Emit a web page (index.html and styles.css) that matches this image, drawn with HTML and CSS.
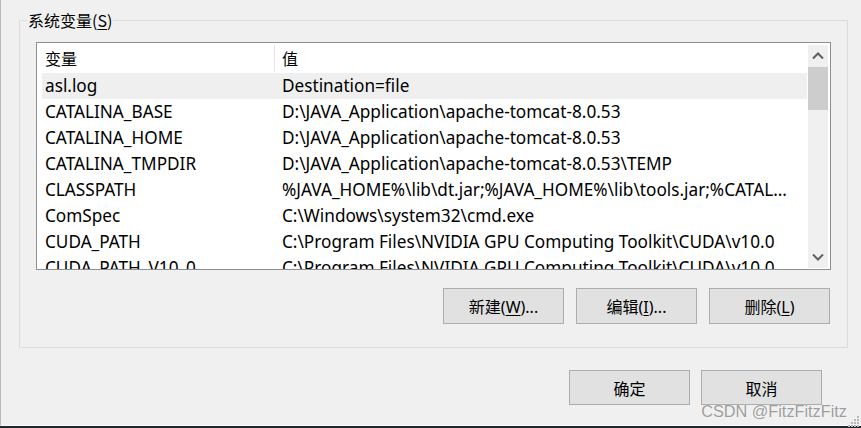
FILE: index.html
```html
<!DOCTYPE html>
<html lang="zh-CN">
<head>
<meta charset="utf-8">
<title>系统变量</title>
<link rel="stylesheet" href="styles.css">
</head>
<body>
<div class="window">
  <fieldset class="group">
    <legend class="group-title">系统变量(<u>S</u>)</legend>
    <div class="listbox">
      <div class="table">
        <div class="thead">
          <div class="hk">变量</div>
          <div class="hv">值</div>
        </div>
        <div class="row selected"><div class="k">asl.log</div><div class="v">Destination=file</div></div>
        <div class="row"><div class="k">CATALINA_BASE</div><div class="v">D:\JAVA_Application\apache-tomcat-8.0.53</div></div>
        <div class="row"><div class="k">CATALINA_HOME</div><div class="v">D:\JAVA_Application\apache-tomcat-8.0.53</div></div>
        <div class="row"><div class="k">CATALINA_TMPDIR</div><div class="v">D:\JAVA_Application\apache-tomcat-8.0.53\TEMP</div></div>
        <div class="row"><div class="k">CLASSPATH</div><div class="v">%JAVA_HOME%\lib\dt.jar;%JAVA_HOME%\lib\tools.jar;%CATAL...</div></div>
        <div class="row"><div class="k">ComSpec</div><div class="v">C:\Windows\system32\cmd.exe</div></div>
        <div class="row"><div class="k">CUDA_PATH</div><div class="v">C:\Program Files\NVIDIA GPU Computing Toolkit\CUDA\v10.0</div></div>
        <div class="row"><div class="k">CUDA_PATH_V10_0</div><div class="v">C:\Program Files\NVIDIA GPU Computing Toolkit\CUDA\v10.0</div></div>
      </div>
      <div class="scrollbar">
        <div class="sb-btn">
          <svg width="12" height="8" viewBox="0 0 12 8"><path d="M1 6.5 L6 1.5 L11 6.5" fill="none" stroke="#606060" stroke-width="2"/></svg>
        </div>
        <div class="sb-thumb"></div>
        <div class="sb-track"></div>
        <div class="sb-btn">
          <svg width="12" height="8" viewBox="0 0 12 8"><path d="M1 1.5 L6 6.5 L11 1.5" fill="none" stroke="#606060" stroke-width="2"/></svg>
        </div>
      </div>
    </div>
    <div class="actions">
      <button class="btn">新建(<u>W</u>)...</button>
      <button class="btn">编辑(<u>I</u>)...</button>
      <button class="btn">删除(<u>L</u>)</button>
    </div>
  </fieldset>
  <div class="footer">
    <button class="btn btn-dlg">确定</button>
    <button class="btn btn-dlg">取消</button>
  </div>
  <div class="watermark">CSDN @FitzFitzFitz</div>
  <div class="grip">
    <svg width="12" height="12" viewBox="0 0 12 12" fill="#b8b8b8">
      <rect x="9" y="0" width="2" height="2"/>
      <rect x="6" y="3" width="2" height="2"/><rect x="9" y="3" width="2" height="2"/>
      <rect x="3" y="6" width="2" height="2"/><rect x="6" y="6" width="2" height="2"/><rect x="9" y="6" width="2" height="2"/>
      <rect x="0" y="9" width="2" height="2"/><rect x="3" y="9" width="2" height="2"/><rect x="6" y="9" width="2" height="2"/><rect x="9" y="9" width="2" height="2"/>
    </svg>
  </div>
</div>
</body>
</html>
```
FILE: styles.css
```css
html, body {
  margin: 0;
  padding: 0;
}
body {
  width: 861px;
  height: 428px;
  background: #1d2a2b;
  overflow: hidden;
  font-family: "Noto Sans", "Noto Sans CJK SC", sans-serif;
  font-size: 16px;
  color: #000;
}
.window {
  position: relative;
  box-sizing: border-box;
  width: 861px;
  height: 426px;
  background: #f0f0f0;
  border-left: 1px solid #b9b9b9;
  border-bottom: 1px solid #f9f9f9;
  padding: 10px 0 0 18px;
}
.group {
  box-sizing: border-box;
  width: 829px;
  height: 338px;
  margin: 0;
  padding: 0 16px 0 16px;
  border: 1px solid #dcdcdc;
  display: flex;
  flex-direction: column;
  min-width: 0;
}
.group-title {
  margin-left: -9px;
  padding: 0 1px;
  line-height: 20px;
  height: 20px;
  font-family: "Noto Sans CJK SC", sans-serif;
}
.group-title u, .btn u {
  text-underline-offset: 2px;
}
.listbox {
  margin-top: 12px;
  box-sizing: border-box;
  width: 795px;
  height: 228px;
  background: #fff;
  border: 1px solid #8c8f94;
  display: flex;
}
.table {
  flex: 1;
  overflow: hidden;
  min-width: 0;
}
.thead {
  display: flex;
  height: 30px;
  align-items: stretch;
  font-family: "Noto Sans CJK SC", sans-serif;
}
.hk {
  width: 229px;
  padding-left: 8px;
  border-right: 1px solid #e5e5e5;
  margin: 2px 0 1px;
  line-height: 27px;
}
.hv {
  padding-left: 7px;
  line-height: 30px;
}
.row {
  display: flex;
  height: 26px;
  line-height: 26px;
  margin: 0 1px 0 5px;
  padding-left: 3px;
  white-space: nowrap;
  font-size: 17.2px;
}
.row.selected {
  background: #efefef;
}
.k {
  width: 237px;
  flex: none;
}
.v {
  flex: 1;
  overflow: hidden;
}
.scrollbar {
  width: 20px;
  margin: 2px 2px 1px 0;
  background: #f0f0f0;
  display: flex;
  flex-direction: column;
}
.sb-btn {
  height: 22px;
  display: flex;
  align-items: center;
  justify-content: center;
}
.sb-thumb {
  height: 43px;
  background: #cdcdcd;
}
.sb-track {
  flex: 1;
}
.actions {
  display: flex;
  justify-content: flex-end;
  gap: 12px;
  margin-top: 18px;
  margin-right: 1px;
}
.btn {
  box-sizing: border-box;
  width: 121px;
  height: 36px;
  background: #e1e1e1;
  border: 1px solid #adadad;
  font-family: "Noto Sans", "Noto Sans CJK SC", sans-serif;
  font-size: 16px;
  color: #000;
  padding: 0;
  margin: 0;
}
.footer {
  display: flex;
  justify-content: flex-end;
  gap: 11px;
  margin-top: 22px;
  padding-right: 39px;
}
.btn-dlg {
  height: 35px;
  font-family: "Noto Sans CJK SC", sans-serif;
}
.watermark {
  position: absolute;
  right: 14px;
  bottom: 4px;
  font-family: "Liberation Sans", Arial, sans-serif;
  font-size: 16.3px;
  line-height: 19px;
  color: #9d9d9d;
  text-shadow: 0 0 1px #fff;
}
.grip {
  position: absolute;
  right: 1px;
  bottom: 2px;
  width: 12px;
  height: 12px;
}
```
